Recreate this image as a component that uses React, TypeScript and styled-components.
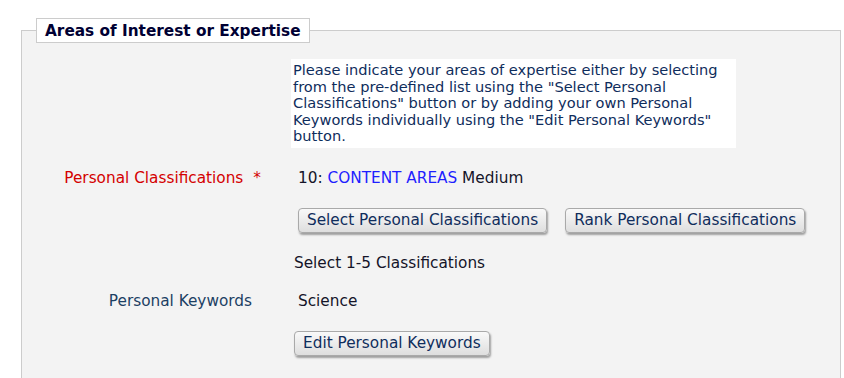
import styled, { createGlobalStyle } from "styled-components";

const GlobalStyle = createGlobalStyle`
  html, body {
    margin: 0;
    padding: 0;
    background: #ffffff;
    font-family: Verdana, "DejaVu Sans", sans-serif;
  }
`;

const COLORS = {
  border: "#cccccc",
  panel: "#f3f3f3",
  navy: "#0f2d5c",
  label: "#1c3f63",
  red: "#d40000",
  link: "#1f1fff",
  ink: "#141428",
};

const FONT = "15.3px";

const App = () => {
  return (
    <Page>
      <GlobalStyle />
      <Panel>
        <Legend>Areas of Interest or Expertise</Legend>

        <Rows>
          <Row>
            <span />
            <HelpBox>
              Please indicate your areas of expertise either by selecting from the pre-defined list using the
              "Select Personal Classifications" button or by adding your own Personal Keywords individually using
              the "Edit Personal Keywords" button.
            </HelpBox>
          </Row>

          <Row>
            <Label $color={COLORS.red} $trail={30}>
              Personal Classifications
              <Required>*</Required>
            </Label>
            <Value $indent={7}>
              10: <Link>CONTENT AREAS</Link> Medium
            </Value>
          </Row>

          <Row>
            <span />
            <Actions $indent={7}>
              <Button type="button">Select Personal Classifications</Button>
              <Button type="button">Rank Personal Classifications</Button>
            </Actions>
          </Row>

          <Row>
            <span />
            <Value $indent={3}>Select 1-5 Classifications</Value>
          </Row>

          <Row>
            <Label $color={COLORS.label} $trail={39}>
              Personal Keywords
            </Label>
            <Value $indent={7}>Science</Value>
          </Row>

          <Row>
            <span />
            <Actions $indent={3}>
              <Button type="button">Edit Personal Keywords</Button>
            </Actions>
          </Row>
        </Rows>
      </Panel>
    </Page>
  );
};

export default App;

const Page = styled.div`
  padding: 18px 3px 0 21px;
  height: 378px;
  box-sizing: border-box;
  overflow: hidden;
`;

const Panel = styled.fieldset`
  margin: 0;
  padding: 0 0 40px;
  border: 1px solid ${COLORS.border};
  background: ${COLORS.panel};
  min-inline-size: 0;
`;

const Legend = styled.legend`
  margin-left: 14px;
  padding: 0 8px;
  height: 25px;
  line-height: 24px;
  box-sizing: border-box;
  border: 1px solid ${COLORS.border};
  background: #ffffff;
  font-size: ${FONT};
  font-weight: bold;
  color: #000033;
`;

const Rows = styled.div`
  display: flex;
  flex-direction: column;
  gap: 22px;
  padding-top: 16px;
`;

const Row = styled.div`
  display: grid;
  grid-template-columns: 269px 1fr;
  align-items: center;
`;

const HelpBox = styled.div`
  width: 445px;
  box-sizing: border-box;
  padding: 3px 2px;
  background: #ffffff;
  font-size: 14.6px;
  line-height: 16.5px;
  color: ${COLORS.navy};
`;

const Label = styled.div<{ $color: string; $trail: number }>`
  text-align: right;
  padding-right: ${(p) => p.$trail}px;
  font-size: ${FONT};
  line-height: 16px;
  color: ${(p) => p.$color};
`;

const Required = styled.span`
  margin-left: 10px;
`;

const Value = styled.div<{ $indent: number }>`
  padding-left: ${(p) => p.$indent}px;
  font-size: ${FONT};
  line-height: 16px;
  color: ${COLORS.ink};
`;

const Link = styled.span`
  color: ${COLORS.link};
`;

const Actions = styled.div<{ $indent: number }>`
  display: flex;
  gap: 18px;
  padding-left: ${(p) => p.$indent}px;
`;

const Button = styled.button`
  height: 25px;
  padding: 0 8px;
  border: 1px solid #a9a9a9;
  border-radius: 4px;
  background: linear-gradient(#f9f9f9, #dedede);
  box-shadow: 1px 2px 2px rgba(0, 0, 0, 0.35);
  font-family: Verdana, "DejaVu Sans", sans-serif;
  font-size: ${FONT};
  color: ${COLORS.navy};
  cursor: pointer;
`;
